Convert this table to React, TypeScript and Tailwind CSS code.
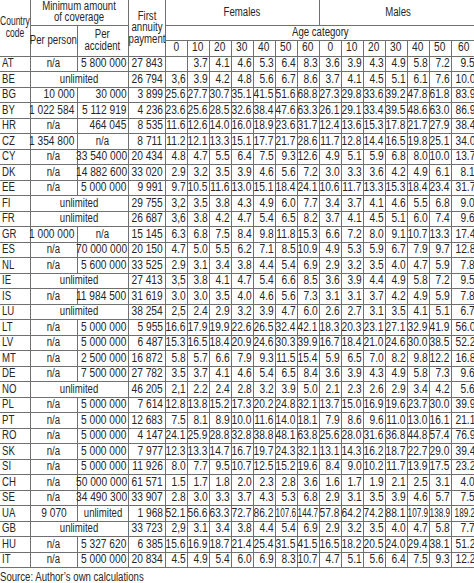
import type { ReactNode } from "react"

type Row = {
  code: string
  perPerson: string
  perAccident: string | null
  first: string
  values: string[]
}

const raw = `AT|n/a|5 800 000|27 843|,3.7,4.1,4.6,5.3,6.4,8.3,3.6,3.9,4.3,4.9,5.8,7.2,9.5
BE|unlimited||26 794|3;6,3.9,4.2,4.8,5.6,6.7,8.6,3.7,4.1,4.5,5.1,6.1,7.6,10.0
BG|10 000|30 000|3 899|25.6,27.7,30.7,35.1,41.5,51.6,68.8,27.3,29.8,33.6,39.2,47.8,61.8,83.9
BY|1 022 584|5 112 919|4 236|23.6,25.6,28.5,32.6,38.4,47.6,63.3,26.1,29.1,33.4,39.5,48.6,63.0,86.9
HR|n/a|464 045|8 535|11.6,12.6,14.0,16.0,18.9,23.6,31.7,12.4,13.6,15.3,17.8,21.7,27.9,38.4
CZ|1 354 800|n/a|8 711|11.2,12.1,13.3,15.1,17.7,21.7,28.6,11.7,12.8,14.4,16.5,19.8,25.1,34.0
CY|n/a|33 540 000|20 434|4.8,4.7,5.5,6.4,7.5,9.3,12.6,4.9,5.1,5.9,6.8,8.0,10.0,13.7
DK|n/a|14 882 600|33 020|2.9,3.2,3.5,3.9,4.6,5.6,7.2,3.0,3.3,3.6,4.2,4.9,6.1,8.1
EE|n/a|5 000 000|9 991|9.7,10.5,11.6,13.0,15.1,18.4,24.1,10.6,11.7,13.3,15.3,18.4,23.4,31.7
FI|unlimited||29 755|3;2,3.5,3.8,4.3,4.9,6.0,7.7,3.4,3.7,4.1,4.6,5.5,6.8,9.0
FR|unlimited||26 687|3;6,3.8,4.2,4.7,5.4,6.5,8.2,3.7,4.1,4.5,5.1,6.0,7.4,9.6
GR|1 000 000|n/a|15 145|6.3,6.8,7.5,8.4,9.8,11.8,15.3,6.6,7.2,8.0,9.1,10.7,13.3,17.4
ES|n/a|70 000 000|20 150|4.7,5.0,5.5,6.2,7.1,8.5,10.9,4.9,5.3,5.9,6.7,7.9,9.7,12.8
NL|n/a|5 600 000|33 525|2.9,3.1,3.4,3.8,4.4,5.4,6.9,2.9,3.2,3.5,4.0,4.7,5.9,7.8
IE|unlimited||27 413|3;5,3.8,4.1,4.7,5.4,6.6,8.5,3.6,3.9,4.4,4.9,5.8,7.2,9.5
IS|n/a|11 984 500|31 619|3.0,3.0,3.5,4.0,4.6,5.6,7.3,3.1,3.1,3.7,4.2,4.9,5.9,7.8
LU|unlimited||38 254|2;5,2.4,2.9,3.2,3.9,4.7,6.0,2.6,2.7,3.1,3.5,4.1,5.1,6.7
LT|n/a|5 000 000|5 955|16.6,17.9,19.9,22.6,26.5,32.4,42.1,18.3,20.3,23.1,27.1,32.9,41.9,56.0
LV|n/a|5 000 000|6 487|15.3,16.5,18.4,20.9,24.6,30.3,39.9,16.7,18.4,21.0,24.6,30.0,38.5,52.2
MT|n/a|2 500 000|16 872|5.8,5.7,6.6,7.9,9.3,11.5,15.4,5.9,6.5,7.0,8.2,9.8,12.2,16.8
DE|n/a|7 500 000|27 782|3.5,3.7,4.1,4.6,5.4,6.5,8.4,3.6,3.9,4.3,4.9,5.8,7.3,9.6
NO|unlimited||46 205|2;1,2.2,2.4,2.8,3.2,3.9,5.0,2.1,2.3,2.6,2.9,3.4,4.2,5.6
PL|n/a|5 000 000|7 614|12.8,13.8,15.2,17.3,20.2,24.8,32.1,13.7,15.0,16.9,19.6,23.7,30.0,39.9
PT|n/a|5 000 000|12 683|7.5,8.1,8.9,10.0,11.6,14.0,18.1,7.9,8.6,9.6,11.0,13.0,16.1,21.1
RO|n/a|5 000 000|4 147|24.1,25.9,28.8,32.8,38.8,48.1,63.8,25.6,28.0,31.6,36.8,44.8,57.4,76.9
SK|n/a|5 000 000|7 977|12.3,13.3,14.7,16.7,19.7,24.3,32.1,13.1,14.3,16.2,18.7,22.7,29.0,39.4
SI|n/a|5 000 000|11 926|8.0,7.7,9.5,10.7,12.5,15.2,19.6,8.4,9.0,10.2,11.7,13.9,17.5,23.2
CH|n/a|50 000 000|61 571|1.5,1.7,1.8,2.0,2.3,2.8,3.6,1.6,1.7,1.9,2.1,2.5,3.1,4.0
SE|n/a|34 490 300|33 907|2.8,3.0,3.3,3.7,4.3,5.3,6.8,2.9,3.1,3.5,3.9,4.6,5.7,7.5
UA|9 070|unlimited|1 968|52.1,56.6,63.3,72.7,86.2,107.6,144.7,57.8,64.2,74.2,88.1,107.9,138.9,189.2
GB|unlimited||33 723|2;9,3.1,3.4,3.8,4.4,5.4,6.9,2.9,3.2,3.5,4.0,4.7,5.8,7.7
HU|n/a|5 327 620|6 385|15.6,16.9,18.7,21.4,25.4,31.5,41.5,16.5,18.2,20.5,24.0,29.4,38.1,51.2
IT|n/a|5 000 000|20 834|4.5,4.9,5.4,6.0,6.9,8.3,10.7,4.7,5.1,5.6,6.4,7.5,9.3,12.2`

// decimal commas in the source are written as ";" so they survive the split
const rows: Row[] = raw.split("\n").map((line) => {
  const [code, perPerson, perAccident, first, vals] = line.split("|")
  return {
    code,
    perPerson,
    perAccident: perAccident === "" ? null : perAccident,
    first,
    values: vals.split(",").map((v) => v.replace(";", ",")),
  }
})

const ages = ["0", "10", "20", "30", "40", "50", "60"]

const cell = "border-r border-b border-[#707070] p-0 font-normal"

type Align = "l" | "c" | "r"
type Squeeze = "text" | "num" | "tight"

const justify: Record<Align, string> = {
  l: "justify-start",
  c: "justify-center",
  r: "justify-end",
}
const origin: Record<Align, string> = {
  l: "origin-left text-left",
  c: "origin-center text-center",
  r: "origin-right text-right",
}
const squeeze: Record<Squeeze, string> = {
  text: "scale-x-[0.8]",
  num: "scale-x-[0.85]",
  tight: "scale-x-[0.68]",
}

/** The source font is a condensed face; squeeze Liberation Sans to match. */
function Narrow({
  children,
  align = "r",
  kind = "num",
  className = "",
}: {
  children: ReactNode
  align?: Align
  kind?: Squeeze
  className?: string
}) {
  return (
    <div className={`flex ${justify[align]} ${className}`}>
      <span
        className={`inline-block shrink-0 whitespace-nowrap ${origin[align]} ${squeeze[kind]}`}
      >
        {children}
      </span>
    </div>
  )
}

function Th({
  children,
  rowSpan,
  colSpan,
}: {
  children: ReactNode
  rowSpan?: number
  colSpan?: number
}) {
  return (
    <th rowSpan={rowSpan} colSpan={colSpan} className={`${cell} align-middle`}>
      <Narrow align="c" kind="text">
        {children}
      </Narrow>
    </th>
  )
}

function isText(v: string) {
  return v === "n/a" || v === "unlimited"
}

export default function App() {
  return (
    <div className="h-[583px] w-[474px] overflow-hidden bg-white font-['Liberation_Sans',Arial,sans-serif] text-[12px] text-[#262626]">
      <table className="w-[477px] table-fixed border-collapse leading-[11.5px]">
        <colgroup>
          <col className="w-[30px]" />
          <col className="w-[47px]" />
          <col className="w-[51px]" />
          <col className="w-[37px]" />
          {Array.from({ length: 13 }).map((_, i) => (
            <col key={i} className="w-[22px]" />
          ))}
          <col className="w-[25px]" />
        </colgroup>
        <thead>
          <tr className="h-[25px]">
            <th rowSpan={3} className={`${cell} align-middle`}>
              <div className="flex justify-start">
                <span className="inline-block shrink-0 origin-left scale-x-[0.71] whitespace-nowrap text-center">
                  Country
                  <br />
                  code
                </span>
              </div>
            </th>
            <Th colSpan={2}>
              Minimum amount
              <br />
              of coverage
            </Th>
            <Th rowSpan={3}>
              First
              <br />
              annuity
              <br />
              payment
            </Th>
            <Th colSpan={7}>Females</Th>
            <Th colSpan={7}>Males</Th>
          </tr>
          <tr className="h-[15px]">
            <Th rowSpan={2}>Per person</Th>
            <Th rowSpan={2}>
              Per
              <br />
              accident
            </Th>
            <Th colSpan={14}>Age category</Th>
          </tr>
          <tr className="h-[16px]">
            {[...ages, ...ages].map((a, i) => (
              <th key={i} className={`${cell} align-middle`}>
                <Narrow align="c">{a}</Narrow>
              </th>
            ))}
          </tr>
        </thead>
        <tbody>
          {rows.map((r) => (
            <tr key={r.code} className="h-[15.5px]">
              <td className={cell}>
                <Narrow align="l" kind="text" className="pl-[2px]">
                  {r.code}
                </Narrow>
              </td>
              {r.perAccident === null ? (
                <td colSpan={2} className={cell}>
                  <Narrow align="c" kind="text">
                    {r.perPerson}
                  </Narrow>
                </td>
              ) : (
                <>
                  <td className={cell}>
                    {isText(r.perPerson) ? (
                      <Narrow align="c" kind="text">
                        {r.perPerson}
                      </Narrow>
                    ) : r.code === "UA" ? (
                      <Narrow align="c">{r.perPerson}</Narrow>
                    ) : (
                      <Narrow className="pr-[2px]">{r.perPerson}</Narrow>
                    )}
                  </td>
                  <td className={cell}>
                    {isText(r.perAccident) ? (
                      <Narrow align="c" kind="text">
                        {r.perAccident}
                      </Narrow>
                    ) : (
                      <Narrow className="pr-[1px]">{r.perAccident}</Narrow>
                    )}
                  </td>
                </>
              )}
              <td className={cell}>
                <Narrow className="pr-[2px]">{r.first}</Narrow>
              </td>
              {r.values.map((v, i) => (
                <td key={i} className={cell}>
                  <Narrow kind={v.length >= 5 ? "tight" : "num"} className="pr-[1px]">
                    {v}
                  </Narrow>
                </td>
              ))}
            </tr>
          ))}
        </tbody>
      </table>
      <Narrow align="l" kind="text" className="pt-[3px] text-[12px] leading-[13px]">
        Source: Author’s own calculations
      </Narrow>
    </div>
  )
}
